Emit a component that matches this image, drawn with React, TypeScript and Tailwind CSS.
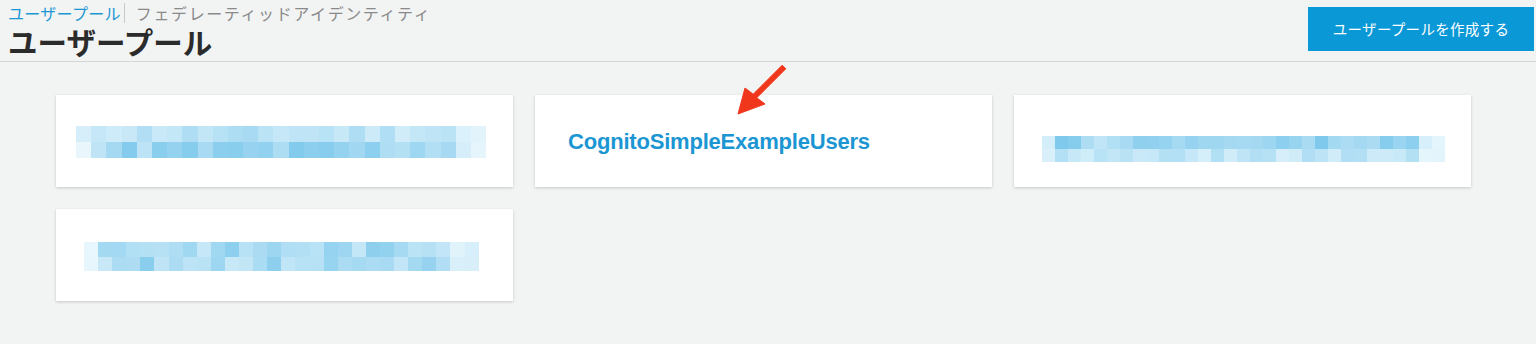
import React from "react";

type BlobProps = { cols: number; rows: number; bw: number; bh: number; seed: number; rowTone?: number[] };

function rand(seed: number) {
  let s = seed;
  return () => {
    s = (s * 9301 + 49297) % 233280;
    return s / 233280;
  };
}

// pixelated (mosaic) pool name
function Blob({ cols, rows, bw, bh, seed, rowTone = [1, 1] }: BlobProps) {
  const r = rand(seed);
  const cells: string[] = [];
  for (let y = 0; y < rows; y++) {
    for (let x = 0; x < cols; x++) {
      let t = (0.3 + r() * 0.55) * rowTone[y];
      if (x === 0 || x >= cols - 2) t = r() * 0.2;
      const c1 = [234, 247, 253];
      const c2 = [120, 198, 235];
      const c = c1.map((v, i) => Math.round(v + (c2[i] - v) * Math.min(t, 1)));
      cells.push(`rgb(${c[0]},${c[1]},${c[2]})`);
    }
  }
  return (
    <div className="grid" style={{ gridTemplateColumns: `repeat(${cols}, ${bw}px)`, gridAutoRows: `${bh}px` }}>
      {cells.map((c, i) => (
        <div key={i} style={{ background: c }} />
      ))}
    </div>
  );
}

function Card({ children, className = "" }: { children: React.ReactNode; className?: string }) {
  return (
    <div className={`h-[92px] bg-white shadow-[0_1px_3px_rgba(0,0,0,0.18)] flex items-center ${className}`}>
      {children}
    </div>
  );
}

export default function App() {
  return (
    <div className="relative min-h-[344px] bg-[#f2f3f3] font-['Noto_Sans_CJK_JP','Liberation_Sans',sans-serif]">
      <header className="h-[62px] border-b border-[#d5d6d6] flex justify-between pl-[8px] pr-[2px]">
        <div>
          <div className="flex items-center text-[16px] leading-[20px] pt-[3px]">
            <span className="text-[#1a98d4] tracking-[0.3px]">ユーザープール</span>
            <span className="ml-[3px] mr-[11px] h-[20px] w-px bg-[#c8c8c8]" />
            <span className="text-[#8a8a8a] tracking-[1.6px]">フェデレーティッドアイデンティティ</span>
          </div>
          <h1 className="text-[29.5px] leading-[32px] font-bold text-[#2b2b2b] mt-[2px]">ユーザープール</h1>
        </div>
        <button className="mt-[7px] w-[226px] h-[44px] bg-[#0b98d6] text-white text-[14.5px] tracking-[0.3px]">
          ユーザープールを作成する
        </button>
      </header>

      <main className="grid grid-cols-[457px_457px_457px] gap-x-[22px] gap-y-[22px] pl-[56px] pt-[33px]">
        <Card className="pl-[20px] pt-[2px]">
          <Blob cols={27} rows={2} bw={15.2} bh={16} seed={11} rowTone={[0.7, 1.15]} />
        </Card>
        <Card className="pl-[33px]">
          <span className="font-['Liberation_Sans',sans-serif] font-bold text-[22px] tracking-[-0.2px] text-[#1b96d3]">
            CognitoSimpleExampleUsers
          </span>
        </Card>
        <Card className="pl-[28px] pt-[16px]">
          <Blob cols={31} rows={2} bw={13} bh={13} seed={47} rowTone={[1.15, 0.6]} />
        </Card>
        <Card className="pl-[28px] pt-[3px]">
          <Blob cols={28} rows={2} bw={14.1} bh={14.5} seed={83} />
        </Card>
      </main>

      <svg className="absolute left-[730px] top-[60px]" width="64" height="60" viewBox="0 0 64 60">
        <path
          d="M52.2 5.2 L23.2 34.2 L15 28 L8 54 L35 44 L26.8 37.8 L55.8 8.8 Z"
          fill="#f0371c"
          stroke="#f0371c"
          strokeWidth="1"
          strokeLinejoin="round"
        />
      </svg>
    </div>
  );
}
